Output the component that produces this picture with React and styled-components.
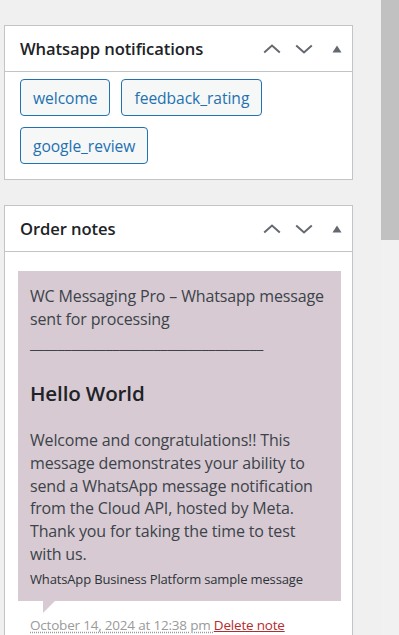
import React from "react";
import styled, { createGlobalStyle } from "styled-components";

const Global = createGlobalStyle`
  html, body { margin: 0; padding: 0; background: #f0f0f1; }
  body { font-family: "Open Sans", "Noto Sans", sans-serif; color: #3c434a; }
  #root { height: 635px; overflow: hidden; }
`;

const Page = styled.div`
  display: flex;
  height: 635px;
  overflow: hidden;
`;

const Main = styled.div`
  width: 349px;
  padding: 25px 28px 0 4px;
  display: flex;
  flex-direction: column;
  gap: 25px;
`;

const ScrollTrack = styled.div`
  width: 18px;
  margin-left: auto;
  background: #f1f1f1;
  display: flex;
  flex-direction: column;
`;

const ScrollThumb = styled.div`
  height: 240px;
  background: #c1c1c1;
`;

const Box = styled.section`
  background: #fff;
  border: 1px solid #c3c4c7;
  flex-shrink: 0;
`;

const Header = styled.div`
  height: 45px;
  border-bottom: 1px solid #c3c4c7;
  display: flex;
  align-items: center;
  padding: 0 0 0 15px;
`;

const Title = styled.h2`
  margin: 0;
  flex: 1;
  font-size: 16.6px;
  font-weight: 600;
  color: #1d2327;
  letter-spacing: -0.1px;
`;

const Handles = styled.div`
  display: flex;
  align-items: center;
`;

const HandleBtn = styled.span`
  width: ${(p) => p.$w || 32}px;
  margin-left: ${(p) => p.$ml || 0}px;
  height: 32px;
  display: flex;
  align-items: center;
  justify-content: center;
  color: #646970;
`;

const Inside = styled.div`
  padding: ${(p) => p.$pad};
`;

const Buttons = styled.div`
  display: flex;
  flex-wrap: wrap;
  gap: 11px;
`;

const TplButton = styled.button`
  height: 37px;
  padding: 0 12px;
  border: 1px solid #2271b1;
  border-radius: 4px;
  background: #f6f7f7;
  color: #2271b1;
  font-family: "Open Sans", "Noto Sans", sans-serif;
  font-size: 15.6px;
  letter-spacing: -0.05px;
  cursor: pointer;
`;

const Note = styled.div`
  position: relative;
  background: #d7cad2;
  padding: 14px 12px 10.5px 12px;
  color: #3c434a;
  font-size: 16px;
  line-height: 22.7px;
  letter-spacing: -0.15px;

  &::after {
    content: "";
    position: absolute;
    left: 25px;
    bottom: -12px;
    border-style: solid;
    border-width: 12px 12px 0 0;
    border-color: #d7cad2 transparent;
  }
`;

const P = styled.p`
  margin: 0 0 ${(p) => p.$mb || 0}px;
  line-height: ${(p) => p.$lh || 22.7}px;
`;

const H3 = styled.h3`
  margin: 0 0 23.3px;
  font-size: 20.6px;
  line-height: 26px;
  font-weight: 600;
  color: #1d2327;
`;

const Small = styled.div`
  margin-top: 3px;
  font-size: 13px;
  line-height: 22px;
  color: #2c3338;
  letter-spacing: -0.15px;
`;

const Meta = styled.p`
  margin: 14px 0 0;
  padding-left: 12px;
  font-size: 13.5px;
  line-height: 20px;
  letter-spacing: -0.2px;
  color: #9a9a9a;
  white-space: nowrap;
`;

const Abbr = styled.abbr`
  text-decoration: underline dotted;
  text-underline-offset: 2px;
`;

const DeleteLink = styled.a`
  color: #b32d2e;
  text-decoration: underline;
`;

const Up = () => (
  <svg width="20" height="20" viewBox="0 0 20 20">
    <path d="M2.2 13.5 L10 6.5 L17.8 13.5" fill="none" stroke="currentColor" strokeWidth="2" />
  </svg>
);
const Down = () => (
  <svg width="20" height="20" viewBox="0 0 20 20">
    <path d="M2.2 6.5 L10 13.5 L17.8 6.5" fill="none" stroke="currentColor" strokeWidth="2" />
  </svg>
);
const Tri = () => (
  <svg width="10" height="8" viewBox="0 0 10 8">
    <path d="M0.5 7.5 L5 0.5 L9.5 7.5 Z" fill="currentColor" />
  </svg>
);

const BoxHeader = ({ title }) => (
  <Header>
    <Title>{title}</Title>
    <Handles>
      <HandleBtn><Up /></HandleBtn>
      <HandleBtn><Down /></HandleBtn>
      <HandleBtn $w={30} $ml={2}><Tri /></HandleBtn>
    </Handles>
  </Header>
);

export default function App() {
  return (
    <Page>
      <Global />
      <Main>
        <Box>
          <BoxHeader title="Whatsapp notifications" />
          <Inside $pad="7px 15px 15px">
            <Buttons>
              <TplButton>welcome</TplButton>
              <TplButton>feedback_rating</TplButton>
              <TplButton>google_review</TplButton>
            </Buttons>
          </Inside>
        </Box>
        <Box>
          <BoxHeader title="Order notes" />
          <Inside $pad="19px 11px 20px 13px">
            <Note>
              <P $mb={25} $lh={23.3}>
                WC Messaging Pro – Whatsapp message
                <br />
                sent for processing
                <br />
                __________________________________
              </P>
              <H3>Hello World</H3>
              <P>
                Welcome and congratulations!! This
                <br />
                message demonstrates your ability to
                <br />
                send a WhatsApp message notification
                <br />
                from the Cloud API, hosted by Meta.
                <br />
                Thank you for taking the time to test
                <br />
                with us.
              </P>
              <Small>WhatsApp Business Platform sample message</Small>
            </Note>
            <Meta>
              <Abbr title="2024-10-14 12:38:00">{"October 14, 2024 at 12:38 pm "}</Abbr>
              <DeleteLink href="#">Delete note</DeleteLink>
            </Meta>
          </Inside>
        </Box>
      </Main>
      <ScrollTrack>
        <ScrollThumb />
      </ScrollTrack>
    </Page>
  );
}
